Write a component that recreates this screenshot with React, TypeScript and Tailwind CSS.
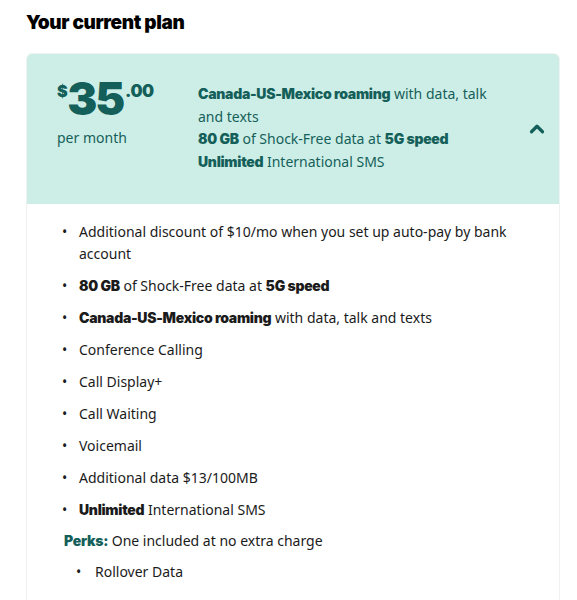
import { ChevronUp } from 'lucide-react'

const body = { fontFamily: '"Noto Sans", "Open Sans", Arial, sans-serif' }
const heavy = 'font-black tracking-[-0.02em] [font-family:Inter,"Noto_Sans",sans-serif]'

type Feature = { parts: [string, boolean][] }

const features: Feature[] = [
  { parts: [['Additional discount of $10/mo when you set up auto-pay by bank account', false]] },
  { parts: [['80 GB', true], [' of Shock-Free data at ', false], ['5G speed', true]] },
  { parts: [['Canada-US-Mexico roaming', true], [' with data, talk and texts', false]] },
  { parts: [['Conference Calling', false]] },
  { parts: [['Call Display+', false]] },
  { parts: [['Call Waiting', false]] },
  { parts: [['Voicemail', false]] },
  { parts: [['Additional data $13/100MB', false]] },
  { parts: [['Unlimited', true], [' International SMS', false]] },
]

function Rich({ parts }: Feature) {
  return (
    <>
      {parts.map(([text, bold], i) =>
        bold ? (
          <span key={i} className={heavy}>
            {text}
          </span>
        ) : (
          <span key={i}>{text}</span>
        )
      )}
    </>
  )
}

export default function App() {
  return (
    <div className="min-h-screen bg-white px-[26px] pt-[12px] text-[#1b1b1b]" style={body}>
      <h1 className={`text-[19px] leading-[22px] text-black ${heavy}`}>Your current plan</h1>

      <div className="mt-[19px] w-[534px] overflow-hidden rounded-[6px] border border-[#eef3f2]">
        {/* Plan summary */}
        <div className="flex h-[150px] bg-[#cdeee6] text-[#155f5a]">
          <div className="w-[171px] shrink-0 pl-[30px] pt-[25px]">
            <div className="flex items-start">
              <span className={`mt-[4px] text-[16px] leading-none ${heavy}`}>$</span>
              <span className={`text-[45px] leading-[40px] tracking-[-0.05em] ${heavy}`}>35</span>
              <span className={`mt-[4px] pl-[2px] text-[17px] leading-none ${heavy}`}>.00</span>
            </div>
            <p className="mt-[9px] text-[14px] leading-[20px]">per month</p>
          </div>
          <div className="w-[305px] pt-[29px] text-[14px] leading-[22.5px]">
            <p>
              <span className={heavy}>Canada-US-Mexico roaming</span> with data, talk and texts
            </p>
            <p>
              <span className={heavy}>80 GB</span> of Shock-Free data at{' '}
              <span className={heavy}>5G speed</span>
            </p>
            <p>
              <span className={heavy}>Unlimited</span> International SMS
            </p>
          </div>
          <div className="flex flex-1 items-center justify-center pl-[12px]">
            <ChevronUp size={22} strokeWidth={3.5} className="text-[#155f5a]" />
          </div>
        </div>

        {/* Feature list */}
        <div className="pb-[20px] pt-[17px] text-[14px] leading-[22px]">
          <ul className="space-y-[10px] pl-[35px] pr-[40px]">
            {features.map((f, i) => (
              <li key={i} className="flex">
                <span className="w-[17px] shrink-0">•</span>
                <span>
                  <Rich parts={f.parts} />
                </span>
              </li>
            ))}
          </ul>
          <p className="mt-[9px] pl-[37px]">
            <span className={`text-[#155f5a] ${heavy}`}>Perks:</span> One included at no extra
            charge
          </p>
          <ul className="mt-[9px] pl-[49px]">
            <li className="flex">
              <span className="w-[19px] shrink-0">•</span>
              <span>Rollover Data</span>
            </li>
          </ul>
        </div>
      </div>
    </div>
  )
}
